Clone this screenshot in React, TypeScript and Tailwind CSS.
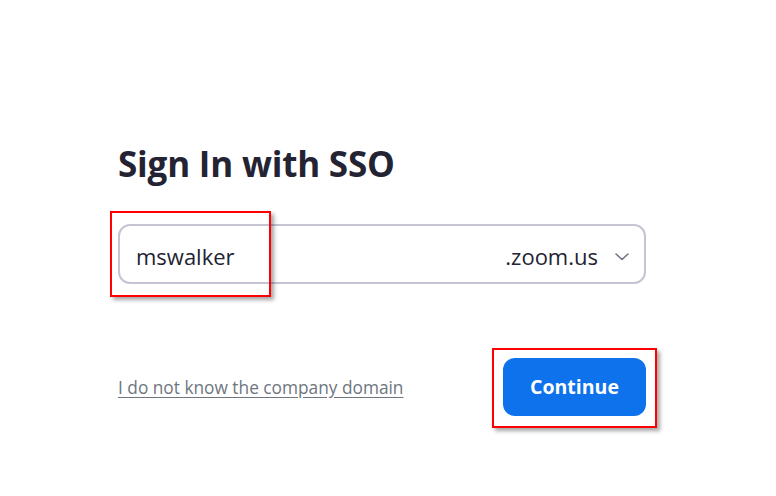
import React from 'react';

const Chevron = () => (
  <svg width="16" height="10" viewBox="0 0 16 10" fill="none" stroke="#747487" strokeWidth="1.6" strokeLinecap="round" strokeLinejoin="round">
    <path d="M2 2l6 5.5L14 2" />
  </svg>
);

export default function App() {
  return (
    <div className="w-[776px] h-[496px] bg-white pl-[118px] pt-[140px]" style={{ fontFamily: '"Open Sans", "Noto Sans", sans-serif' }}>
      <div className="w-[528px]">
        <h1 className="text-[35px] leading-[48px] font-bold text-[#232333] tracking-[-0.2px]">Sign In with SSO</h1>

        <div className="relative mt-[36px]">
          <div className="h-[60px] border-2 border-[#c4c4d4] rounded-[12px] flex items-center pl-[16px] pr-[14px] pt-[5px] text-[#232333]">
            <span className="text-[22px] flex-1">mswalker</span>
            <span className="text-[22px] mr-[16px]">.zoom.us</span>
            <Chevron />
          </div>
          <div className="absolute left-[-8px] top-[-13px] w-[161px] h-[86px] border-2 border-[#ff0000] shadow-[3px_3px_4px_rgba(0,0,0,0.35)]"></div>
        </div>

        <div className="flex items-center justify-between mt-[74px]">
          <a href="#" className="text-[17.3px] text-[#6e7680] underline underline-offset-[3px] mt-[2px]">I do not know the company domain</a>
          <div className="relative">
            <button className="w-[143px] h-[58px] bg-[#0e72ed] rounded-[12px] text-white text-[19.5px] font-bold">Continue</button>
            <div className="absolute left-[-11px] top-[-10px] w-[165px] h-[80px] border-2 border-[#ff0000] shadow-[3px_3px_4px_rgba(0,0,0,0.35)]"></div>
          </div>
        </div>
      </div>
    </div>
  );
}
